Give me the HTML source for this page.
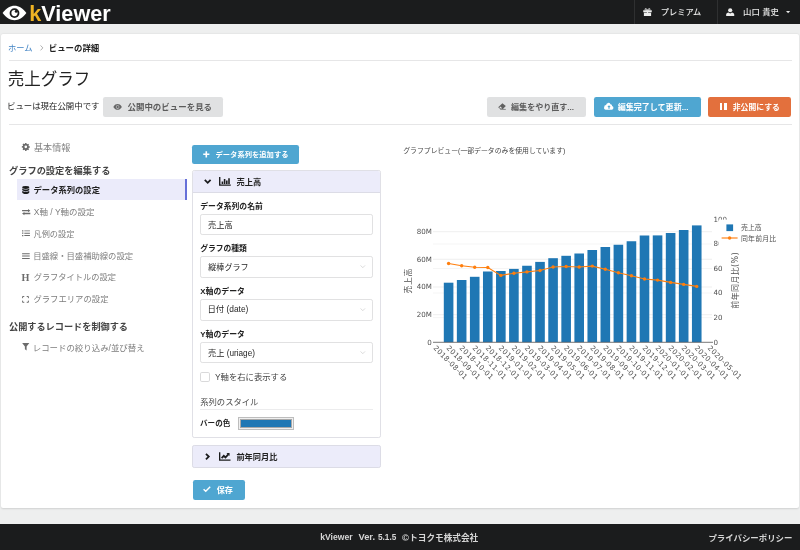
<!DOCTYPE html>
<html lang="ja">
<head>
<meta charset="utf-8">
<title>kViewer</title>
<style>
*{box-sizing:border-box;margin:0;padding:0}
html,body{width:800px;height:550px;overflow:hidden}
body{background:#eeefef;font-family:"Liberation Sans","Noto Sans CJK JP",sans-serif;color:#222;position:relative;font-size:8px}
#w{position:absolute;left:0;top:0;width:800px;height:550px;will-change:transform}
.a{position:absolute}
.t{position:absolute;white-space:nowrap;line-height:1}
#hdr{position:absolute;left:0;top:0;width:800px;height:24px;background:#1b1c1d}
#ftr{position:absolute;left:0;top:523.7px;width:800px;height:26.3px;background:#1b1c1d}
#card{position:absolute;left:1px;top:33.5px;width:797.5px;height:474.7px;background:#fff;border-radius:2px;box-shadow:0 0.5px 2px rgba(0,0,0,.13)}
.hr{position:absolute;height:1px;background:#e6e6e7}
.btn{position:absolute;border-radius:2.2px}
.inp{position:absolute;left:200.2px;width:172.5px;height:21.800px;border:1px solid #e1e1e2;border-radius:2.2px;background:#fff}
svg{position:absolute;overflow:visible}
</style>
</head>
<body>
<div id="w">

<div id="hdr">
<svg style="left:0;top:0" width="30" height="25" viewBox="0 0 30 25"><path d="M2.6 13C6.5 7.900 10.2 5.800 14.5 5.800S22.500 7.900 26.400 13C22.500 18.100 18.800 20.200 14.500 20.200S6.500 18.100 2.600 13Z" fill="#fff"/><circle cx="14.5" cy="13.1" r="4.9" fill="#1b1c1d"/><circle cx="14.5" cy="13.1" r="3.1" fill="#fff"/><circle cx="16.2" cy="11.4" r="1.45" fill="#1b1c1d"/></svg>
<span class="t" style="left:29.2px;top:2.7px;font-size:21.6px;font-weight:bold;color:#fff;letter-spacing:0.05px"><span style="color:#f0b323">k</span>Viewer</span>
<div class="a" style="left:634.3px;top:0;width:1px;height:24px;background:#2f3031"></div>
<div class="a" style="left:716.5px;top:0;width:1px;height:24px;background:#2f3031"></div>
<svg style="left:643px;top:7.5px" width="9" height="8" viewBox="0 0 18 16"><path fill="#ededed" d="M0.500 4.500h17v4H0.500zM1.800 9.500h6v6.500h-6zM10.200 9.500h6v6.500h-6zM7.800 4.500h2.400v11.500H7.800z"/><path fill="none" stroke="#ededed" stroke-width="1.700" d="M9 4.500C7 0.500 3.500 0.500 4 2.700S9 4.500 9 4.500 13.500 4.900 14 2.700 11 0.500 9 4.500z"/></svg>
<span class="t" style="left:660.83px;top:8.95px;font-size:8.20px;font-weight:500;color:#e6e6e6;">プレミアム</span>
<svg style="left:725.800px;top:7.5px" width="8.4" height="8" viewBox="0 0 16 15"><circle cx="8" cy="4.200" r="4" fill="#ededed"/><path fill="#ededed" d="M0.300 15v-2.500c0-2.400 2-3.700 4.400-4L8 10.200l3.300-1.700c2.400.3 4.400 1.600 4.400 4V15z"/></svg>
<span class="t" style="left:743.05px;top:7.95px;font-size:8.42px;font-weight:500;color:#e6e6e6;">山口 貴史</span>
<svg style="left:786px;top:10.7px" width="4.2" height="2.3" viewBox="0 0 8 4"><path d="M0 0h8L4 4z" fill="#e8e8e8"/></svg>
</div>
<div id="card"></div>
<span class="t" style="left:8.00px;top:45.12px;font-size:8.27px;font-weight:normal;color:#4183c4;">ホーム</span>
<svg style="left:39.6px;top:45.2px" width="3.4" height="5.8" viewBox="0 0 4 7"><path d="M0.6 0.5L3.4 3.5L0.6 6.500" fill="none" stroke="#a0a0a0" stroke-width="1"/></svg>
<span class="t" style="left:48.75px;top:44.25px;font-size:8.43px;font-weight:bold;color:#222;">ビューの詳細</span>
<div class="hr" style="left:8.5px;top:59.6px;width:783px"></div>
<span class="t" style="left:7.75px;top:71.58px;font-size:16.52px;font-weight:normal;color:#222;">売上グラフ</span>
<span class="t" style="left:7.00px;top:102.03px;font-size:8.42px;font-weight:normal;color:#222;">ビューは現在公開中です</span>
<div class="hr" style="left:8.5px;top:124.2px;width:783px"></div>
<div class="btn" style="left:103.2px;top:96.600px;width:119.800px;height:20.1px;background:#e0e1e2"></div>
<svg style="left:113.200px;top:103.700px" width="9.2" height="5.900" viewBox="0 0 15 10"><path d="M0.200 5C2.500 1.400 5 0.200 7.500 0.200S12.500 1.400 14.800 5C12.500 8.600 10 9.800 7.500 9.800S2.500 8.600 0.200 5z" fill="#666"/><circle cx="7.5" cy="5" r="3" fill="#d4d5d6"/><circle cx="7.5" cy="5" r="2" fill="#666"/></svg>
<span class="t" style="left:127.50px;top:103.05px;font-size:8.46px;font-weight:bold;color:#5c5c5c;">公開中のビューを見る</span>
<div class="btn" style="left:487px;top:96.600px;width:98.5px;height:20.1px;background:#e0e1e2"></div>
<svg style="left:497.5px;top:103px" width="8" height="7" viewBox="0 0 8 7"><path d="M4.4 0.200L7.800 3L4.900 6.100H2.200L0.200 4.300Z" fill="#606060"/><path d="M2.300 3.500L4.200 5.200L3.700 5.500H2.600L1.300 4.350Z" fill="#e8e9ea"/><path d="M2.200 6.400H7.800" stroke="#606060" stroke-width="0.700"/></svg>
<span class="t" style="left:511.05px;top:103.72px;font-size:8.05px;font-weight:bold;color:#5c5c5c;">編集をやり直す...</span>
<div class="btn" style="left:593.5px;top:96.600px;width:107px;height:20.1px;background:#4fa6d1"></div>
<svg style="left:603.8px;top:103.1px" width="10" height="7" viewBox="0 0 20 14"><path fill="#fff" d="M16.200 6.100A3.300 3.300 0 0 0 13 2.500 4.600 4.600 0 0 0 4.200 4 3.800 3.800 0 0 0 0.500 8 3.700 3.700 0 0 0 4.200 13.500H15.500A3.800 3.800 0 0 0 16.200 6.100z"/><path fill="#4fa6d1" d="M10 4.500L13.300 8.200H11.200V11.500H8.800V8.200H6.700z"/></svg>
<span class="t" style="left:617.67px;top:103.72px;font-size:8.04px;font-weight:bold;color:#fff;">編集完了して更新...</span>
<div class="btn" style="left:708.2px;top:96.600px;width:83.300px;height:20.1px;background:#e3703d"></div>
<div class="a" style="left:719.6px;top:103.2px;width:2.700px;height:6.700px;background:#fff"></div><div class="a" style="left:724px;top:103.2px;width:2.700px;height:6.700px;background:#fff"></div>
<span class="t" style="left:732.75px;top:103.60px;font-size:7.83px;font-weight:bold;color:#fff;">非公開にする</span>
<svg style="left:22.2px;top:142.8px" width="7.6" height="7.6" viewBox="0 0 16 16"><path fill="#6c6c6c" fill-rule="evenodd" d="M6.600 0h2.800l.4 2.100 1.300.6 1.800-1.200 2 2-1.200 1.800.6 1.300 2.100.4v2.800l-2.100.4-.6 1.300 1.200 1.800-2 2-1.800-1.200-1.300.6-.4 2.100H6.600l-.4-2.100-1.300-.6-1.800 1.200-2-2 1.200-1.800-.6-1.300L-.4 9.400V6.600l2.100-.4.6-1.300L1.100 3.100l2-2 1.800 1.200 1.300-.6zM8 5.200a2.800 2.800 0 1 0 0 5.600 2.800 2.800 0 0 0 0-5.600z"/></svg>
<span class="t" style="left:34.02px;top:143.60px;font-size:9.09px;font-weight:normal;color:#7e7e7e;">基本情報</span>
<span class="t" style="left:9.00px;top:166.70px;font-size:9.22px;font-weight:bold;color:#444;">グラフの設定を編集する</span>
<div class="a" style="left:17px;top:178.7px;width:170px;height:21.6px;background:#ebebfa"></div><div class="a" style="left:185.200px;top:178.7px;width:2px;height:21.6px;background:#6670d8"></div>
<svg style="left:22px;top:185.900px" width="7.5" height="8.300" viewBox="0 0 14 16"><ellipse cx="7" cy="2.800" rx="6.800" ry="2.800" fill="#1b1c1d"/><path fill="#1b1c1d" d="M0.200 4.600C1.500 6.200 4 6.700 7 6.700s5.500-.5 6.800-2.100v2.600c0 1.500-3 2.700-6.800 2.700S.2 8.700.2 7.200zM0.200 9.200c1.300 1.600 3.800 2.100 6.800 2.100s5.500-.5 6.800-2.100v3.300c0 1.500-3 3-6.800 3S.2 14 .2 12.500z"/></svg>
<span class="t" style="left:33.55px;top:186.25px;font-size:8.30px;font-weight:bold;color:#222;">データ系列の設定</span>
<svg style="left:21.6px;top:208.600px" width="8.4" height="6.2" viewBox="0 0 16 12"><path fill="#6c6c6c" d="M0 1.800h11.500V0L16 3.200 11.500 6.400V4.600H0zM16 10.200H4.500V12L0 8.800 4.500 5.600v1.800H16z"/></svg>
<span class="t" style="left:33.80px;top:208.25px;font-size:8.47px;font-weight:normal;color:#7e7e7e;">X軸 / Y軸の設定</span>
<svg style="left:21.7px;top:230.2px" width="8" height="6.4" viewBox="0 0 16 13"><path fill="#6c6c6c" d="M0 0.500h2.600v2.400H0zM0 5.300h2.600v2.400H0zM0 10.100h2.600v2.400H0zM4.600 0.800h11.400v1.800H4.600zM4.600 5.600h11.400v1.800H4.600zM4.600 10.400h11.400v1.800H4.600z"/></svg>
<span class="t" style="left:33.55px;top:230.62px;font-size:8.17px;font-weight:normal;color:#7e7e7e;">凡例の設定</span>
<svg style="left:21.8px;top:252.500px" width="7.800" height="6.2" viewBox="0 0 16 13"><path fill="#6c6c6c" d="M0 0.400h16v2.200H0zM0 5.400h16v2.200H0zM0 10.400h16v2.200H0z"/></svg>
<span class="t" style="left:33.17px;top:251.62px;font-size:8.33px;font-weight:normal;color:#7e7e7e;">目盛線・目盛補助線の設定</span>
<span class="t" style="left:21.6px;top:273px;font-family:'Liberation Serif',serif;font-weight:bold;font-size:10.2px;color:#6c6c6c">H</span>
<span class="t" style="left:33.67px;top:274.43px;font-size:8.24px;font-weight:normal;color:#7e7e7e;">グラフタイトルの設定</span>
<svg style="left:22.2px;top:295.900px" width="7" height="6.800" viewBox="0 0 14 14"><path fill="none" stroke="#6c6c6c" stroke-width="2" d="M1 4.500V1h3.500M9.500 1H13v3.500M13 9.500V13H9.500M4.500 13H1V9.500"/></svg>
<span class="t" style="left:33.42px;top:295.32px;font-size:8.35px;font-weight:normal;color:#7e7e7e;">グラフエリアの設定</span>
<span class="t" style="left:9.00px;top:323.38px;font-size:9.17px;font-weight:bold;color:#444;">公開するレコードを制御する</span>
<svg style="left:21.800px;top:343.200px" width="7.5" height="7.5" viewBox="0 0 14 14"><path fill="#6c6c6c" d="M0.300 0h13.400L8.600 6.300V14L5.400 11.600V6.300z"/></svg>
<span class="t" style="left:32.75px;top:343.65px;font-size:8.44px;font-weight:normal;color:#7e7e7e;">レコードの絞り込み/並び替え</span>
<div class="btn" style="left:192.4px;top:144.700px;width:106.200px;height:19.1px;background:#4fa6d1"></div>
<svg style="left:203px;top:151.200px" width="6.6" height="6.600" viewBox="0 0 10 10"><path d="M5 0.300v9.400M0.300 5h9.400" stroke="#fff" stroke-width="2.400"/></svg>
<span class="t" style="left:215.52px;top:151.15px;font-size:7.30px;font-weight:bold;color:#fff;">データ系列を追加する</span>
<div class="a" style="left:192.300px;top:170.200px;width:188.300px;height:267.800px;border:1px solid #e0e0e6;border-radius:2.2px;background:#fff"></div>
<div class="a" style="left:192.800px;top:170.700px;width:187.300px;height:22px;background:#ececfa;border-bottom:1px solid #dcdce6;border-radius:2px 2px 0 0"></div>
<svg style="left:203.500px;top:179px" width="7.4" height="4.900" viewBox="0 0 14 9"><path d="M1.500 1.500L7 7l5.500-5.500" fill="none" stroke="#1b1c1d" stroke-width="3.400"/></svg>
<svg style="left:218.900px;top:176.900px" width="11.800" height="8.800" viewBox="0 0 24 18"><path d="M1.400 0v16.600H24" fill="none" stroke="#1b1c1d" stroke-width="2.800"/><path fill="#1b1c1d" d="M5.300 9h3.200v5.300H5.300zM9.800 4h3.200v10.300H9.800zM14.300 7h3.200v7.300h-3.200zM18.800 2.500h3.200v11.800h-3.200z"/></svg>
<span class="t" style="left:236.55px;top:179.32px;font-size:8.26px;font-weight:bold;color:#222;">売上高</span>
<span class="t" style="left:200.30px;top:203.10px;font-size:7.82px;font-weight:bold;color:#222;">データ系列の名前</span>
<div class="inp" style="top:213.500px"></div>
<span class="t" style="left:208.02px;top:221.53px;font-size:8.23px;font-weight:normal;color:#262626;">売上高</span>
<span class="t" style="left:200.20px;top:245.00px;font-size:7.79px;font-weight:bold;color:#222;">グラフの種類</span>
<div class="inp" style="top:256px"></div>
<span class="t" style="left:208.30px;top:263.50px;font-size:8.07px;font-weight:normal;color:#262626;">縦棒グラフ</span>
<span class="t" style="left:200.35px;top:288.10px;font-size:7.86px;font-weight:bold;color:#222;">X軸のデータ</span>
<div class="inp" style="top:298.900px"></div>
<span class="t" style="left:207.43px;top:305.02px;font-size:8.39px;font-weight:normal;color:#262626;">日付 (date)</span>
<span class="t" style="left:200.35px;top:331.30px;font-size:7.86px;font-weight:bold;color:#222;">Y軸のデータ</span>
<div class="inp" style="top:341.700px"></div>
<span class="t" style="left:208.05px;top:349.62px;font-size:8.20px;font-weight:normal;color:#262626;">売上 (uriage)</span>
<svg style="left:360.300px;top:265.3px" width="5.6" height="3.2" viewBox="0 0 10 6"><path d="M0.800 0.800L5 5l4.200-4.200" fill="none" stroke="#c4c4c4" stroke-width="1.200"/></svg>
<svg style="left:360.300px;top:308.2px" width="5.6" height="3.2" viewBox="0 0 10 6"><path d="M0.800 0.800L5 5l4.200-4.200" fill="none" stroke="#c4c4c4" stroke-width="1.200"/></svg>
<svg style="left:360.300px;top:351.0px" width="5.6" height="3.2" viewBox="0 0 10 6"><path d="M0.800 0.800L5 5l4.200-4.200" fill="none" stroke="#c4c4c4" stroke-width="1.200"/></svg>
<div class="a" style="left:200.200px;top:372.300px;width:9.600px;height:9.600px;border:1px solid #d9d9da;border-radius:1.800px;background:#fff"></div>
<span class="t" style="left:214.97px;top:373.43px;font-size:8.35px;font-weight:normal;color:#444;">Y軸を右に表示する</span>
<span class="t" style="left:200.22px;top:397.82px;font-size:8.32px;font-weight:normal;color:#4a4a4a;">系列のスタイル</span>
<div class="hr" style="left:200.200px;top:408.700px;width:172.500px;background:#ececed"></div>
<span class="t" style="left:200.10px;top:419.88px;font-size:7.54px;font-weight:bold;color:#222;">バーの色</span>
<div class="a" style="left:237.500px;top:417px;width:56.500px;height:12.600px;border:1px solid #bdbdbd;background:#efefef"></div>
<div class="a" style="left:240.900px;top:420px;width:50.200px;height:6.800px;background:#1f77b4;outline:0.6px solid #a8a8a8"></div>
<div class="a" style="left:192.300px;top:445.200px;width:188.300px;height:22.400px;border:1px solid #dcdce6;border-radius:2.2px;background:#ececfa"></div>
<svg style="left:204.700px;top:452.700px" width="5" height="7.200" viewBox="0 0 9 14"><path d="M1.500 1.500L7 7l-5.500 5.500" fill="none" stroke="#1b1c1d" stroke-width="3.500"/></svg>
<svg style="left:219px;top:451.900px" width="11.500" height="9" viewBox="0 0 24 18"><path d="M1.400 0v16.600H24" fill="none" stroke="#1b1c1d" stroke-width="2.800"/><path d="M5.500 12.500l4.500-5 3.500 3.500 6-6.500" fill="none" stroke="#1b1c1d" stroke-width="3.600"/><path fill="#1b1c1d" d="M15.500 1.500h6.500v6.500z"/></svg>
<span class="t" style="left:236.42px;top:454.32px;font-size:8.21px;font-weight:bold;color:#222;">前年同月比</span>
<div class="btn" style="left:192.600px;top:479.600px;width:52px;height:20.2px;background:#4fa6d1"></div>
<svg style="left:203.400px;top:486.400px" width="7.800" height="6.200" viewBox="0 0 13 10"><path d="M1 5.200l3.600 3.500L12 1.200" fill="none" stroke="#fff" stroke-width="2.400"/></svg>
<span class="t" style="left:216.78px;top:487.02px;font-size:8.10px;font-weight:bold;color:#fff;">保存</span>
<span class="t" style="left:403.23px;top:148.03px;font-size:6.87px;font-weight:normal;color:#444;">グラフプレビュー(一部データのみを使用しています)</span>
<svg style="left:0;top:0" width="800" height="550" viewBox="0 0 800 550">
<path d="M433 314.7H712" stroke="#ebebeb" stroke-width="0.8"/>
<path d="M433 287H712" stroke="#ebebeb" stroke-width="0.8"/>
<path d="M433 259.3H712" stroke="#ebebeb" stroke-width="0.8"/>
<path d="M433 231.7H712" stroke="#ebebeb" stroke-width="0.8"/>
<path d="M433 317.6H712" stroke="#f1f1f1" stroke-width="0.7"/>
<path d="M433 293H712" stroke="#f1f1f1" stroke-width="0.7"/>
<path d="M433 268.5H712" stroke="#f1f1f1" stroke-width="0.7"/>
<path d="M433 244H712" stroke="#f1f1f1" stroke-width="0.7"/>
<rect x="443.80" y="282.7" width="9.6" height="59.50" fill="#1f77b4"/>
<rect x="456.86" y="280" width="9.6" height="62.20" fill="#1f77b4"/>
<rect x="469.92" y="276.8" width="9.6" height="65.40" fill="#1f77b4"/>
<rect x="482.98" y="271.5" width="9.6" height="70.70" fill="#1f77b4"/>
<rect x="496.04" y="271" width="9.6" height="71.20" fill="#1f77b4"/>
<rect x="509.10" y="268.9" width="9.6" height="73.30" fill="#1f77b4"/>
<rect x="522.16" y="265.75" width="9.6" height="76.45" fill="#1f77b4"/>
<rect x="535.22" y="261.9" width="9.6" height="80.30" fill="#1f77b4"/>
<rect x="548.28" y="258.2" width="9.6" height="84.00" fill="#1f77b4"/>
<rect x="561.34" y="255.8" width="9.6" height="86.40" fill="#1f77b4"/>
<rect x="574.40" y="253.5" width="9.6" height="88.70" fill="#1f77b4"/>
<rect x="587.46" y="250" width="9.6" height="92.20" fill="#1f77b4"/>
<rect x="600.52" y="247" width="9.6" height="95.20" fill="#1f77b4"/>
<rect x="613.58" y="244.75" width="9.6" height="97.45" fill="#1f77b4"/>
<rect x="626.64" y="241.25" width="9.6" height="100.95" fill="#1f77b4"/>
<rect x="639.70" y="235.5" width="9.6" height="106.70" fill="#1f77b4"/>
<rect x="652.76" y="235.4" width="9.6" height="106.80" fill="#1f77b4"/>
<rect x="665.82" y="233" width="9.6" height="109.20" fill="#1f77b4"/>
<rect x="678.88" y="230" width="9.6" height="112.20" fill="#1f77b4"/>
<rect x="691.94" y="225.4" width="9.6" height="116.80" fill="#1f77b4"/>
<path d="M433 342.3H713" stroke="#555" stroke-width="0.8"/>
<polyline points="448.60,263.5 461.66,265.75 474.72,267.2 487.78,267.5 500.84,275.4 513.90,273.3 526.96,271.9 540.02,270.5 553.08,267 566.14,266.5 579.20,267 592.26,266.1 605.32,269.25 618.38,272.75 631.44,275.7 644.50,279 657.56,280.1 670.62,282.4 683.68,284.4 696.74,286.4" fill="none" stroke="#ff7f0e" stroke-width="1.15"/>
<circle cx="448.60" cy="263.5" r="1.7" fill="#ff7f0e"/>
<circle cx="461.66" cy="265.75" r="1.7" fill="#ff7f0e"/>
<circle cx="474.72" cy="267.2" r="1.7" fill="#ff7f0e"/>
<circle cx="487.78" cy="267.5" r="1.7" fill="#ff7f0e"/>
<circle cx="500.84" cy="275.4" r="1.7" fill="#ff7f0e"/>
<circle cx="513.90" cy="273.3" r="1.7" fill="#ff7f0e"/>
<circle cx="526.96" cy="271.9" r="1.7" fill="#ff7f0e"/>
<circle cx="540.02" cy="270.5" r="1.7" fill="#ff7f0e"/>
<circle cx="553.08" cy="267" r="1.7" fill="#ff7f0e"/>
<circle cx="566.14" cy="266.5" r="1.7" fill="#ff7f0e"/>
<circle cx="579.20" cy="267" r="1.7" fill="#ff7f0e"/>
<circle cx="592.26" cy="266.1" r="1.7" fill="#ff7f0e"/>
<circle cx="605.32" cy="269.25" r="1.7" fill="#ff7f0e"/>
<circle cx="618.38" cy="272.75" r="1.7" fill="#ff7f0e"/>
<circle cx="631.44" cy="275.7" r="1.7" fill="#ff7f0e"/>
<circle cx="644.50" cy="279" r="1.7" fill="#ff7f0e"/>
<circle cx="657.56" cy="280.1" r="1.7" fill="#ff7f0e"/>
<circle cx="670.62" cy="282.4" r="1.7" fill="#ff7f0e"/>
<circle cx="683.68" cy="284.4" r="1.7" fill="#ff7f0e"/>
<circle cx="696.74" cy="286.4" r="1.7" fill="#ff7f0e"/>
<text x="431.8" y="234" text-anchor="end" style="font-family:'DejaVu Sans',Verdana,sans-serif;font-size:7.1px" fill="#505050">80M</text>
<text x="431.8" y="262" text-anchor="end" style="font-family:'DejaVu Sans',Verdana,sans-serif;font-size:7.1px" fill="#505050">60M</text>
<text x="431.8" y="289" text-anchor="end" style="font-family:'DejaVu Sans',Verdana,sans-serif;font-size:7.1px" fill="#505050">40M</text>
<text x="431.8" y="317" text-anchor="end" style="font-family:'DejaVu Sans',Verdana,sans-serif;font-size:7.1px" fill="#505050">20M</text>
<text x="431.8" y="345" text-anchor="end" style="font-family:'DejaVu Sans',Verdana,sans-serif;font-size:7.1px" fill="#505050">0</text>
<text x="713.5" y="222" style="font-family:'DejaVu Sans',Verdana,sans-serif;font-size:7.1px" fill="#505050">100</text>
<text x="713.5" y="246" style="font-family:'DejaVu Sans',Verdana,sans-serif;font-size:7.1px" fill="#505050">80</text>
<text x="713.5" y="271" style="font-family:'DejaVu Sans',Verdana,sans-serif;font-size:7.1px" fill="#505050">60</text>
<text x="713.5" y="295" style="font-family:'DejaVu Sans',Verdana,sans-serif;font-size:7.1px" fill="#505050">40</text>
<text x="713.5" y="320" style="font-family:'DejaVu Sans',Verdana,sans-serif;font-size:7.1px" fill="#505050">20</text>
<text x="713.5" y="345" style="font-family:'DejaVu Sans',Verdana,sans-serif;font-size:7.1px" fill="#505050">0</text>
<text transform="translate(434.64,346.8) rotate(45)" x="0" y="2.4" style="font-family:'DejaVu Sans',Verdana,sans-serif;font-size:7.1px;letter-spacing:0.36px" fill="#505050">2018-08-01</text>
<text transform="translate(447.70,346.8) rotate(45)" x="0" y="2.4" style="font-family:'DejaVu Sans',Verdana,sans-serif;font-size:7.1px;letter-spacing:0.36px" fill="#505050">2018-09-01</text>
<text transform="translate(460.76,346.8) rotate(45)" x="0" y="2.4" style="font-family:'DejaVu Sans',Verdana,sans-serif;font-size:7.1px;letter-spacing:0.36px" fill="#505050">2018-10-01</text>
<text transform="translate(473.82,346.8) rotate(45)" x="0" y="2.4" style="font-family:'DejaVu Sans',Verdana,sans-serif;font-size:7.1px;letter-spacing:0.36px" fill="#505050">2018-11-01</text>
<text transform="translate(486.88,346.8) rotate(45)" x="0" y="2.4" style="font-family:'DejaVu Sans',Verdana,sans-serif;font-size:7.1px;letter-spacing:0.36px" fill="#505050">2018-12-01</text>
<text transform="translate(499.94,346.8) rotate(45)" x="0" y="2.4" style="font-family:'DejaVu Sans',Verdana,sans-serif;font-size:7.1px;letter-spacing:0.36px" fill="#505050">2019-01-01</text>
<text transform="translate(513.00,346.8) rotate(45)" x="0" y="2.4" style="font-family:'DejaVu Sans',Verdana,sans-serif;font-size:7.1px;letter-spacing:0.36px" fill="#505050">2019-02-01</text>
<text transform="translate(526.06,346.8) rotate(45)" x="0" y="2.4" style="font-family:'DejaVu Sans',Verdana,sans-serif;font-size:7.1px;letter-spacing:0.36px" fill="#505050">2019-03-01</text>
<text transform="translate(539.12,346.8) rotate(45)" x="0" y="2.4" style="font-family:'DejaVu Sans',Verdana,sans-serif;font-size:7.1px;letter-spacing:0.36px" fill="#505050">2019-04-01</text>
<text transform="translate(552.18,346.8) rotate(45)" x="0" y="2.4" style="font-family:'DejaVu Sans',Verdana,sans-serif;font-size:7.1px;letter-spacing:0.36px" fill="#505050">2019-05-01</text>
<text transform="translate(565.24,346.8) rotate(45)" x="0" y="2.4" style="font-family:'DejaVu Sans',Verdana,sans-serif;font-size:7.1px;letter-spacing:0.36px" fill="#505050">2019-06-01</text>
<text transform="translate(578.30,346.8) rotate(45)" x="0" y="2.4" style="font-family:'DejaVu Sans',Verdana,sans-serif;font-size:7.1px;letter-spacing:0.36px" fill="#505050">2019-07-01</text>
<text transform="translate(591.36,346.8) rotate(45)" x="0" y="2.4" style="font-family:'DejaVu Sans',Verdana,sans-serif;font-size:7.1px;letter-spacing:0.36px" fill="#505050">2019-08-01</text>
<text transform="translate(604.42,346.8) rotate(45)" x="0" y="2.4" style="font-family:'DejaVu Sans',Verdana,sans-serif;font-size:7.1px;letter-spacing:0.36px" fill="#505050">2019-09-01</text>
<text transform="translate(617.48,346.8) rotate(45)" x="0" y="2.4" style="font-family:'DejaVu Sans',Verdana,sans-serif;font-size:7.1px;letter-spacing:0.36px" fill="#505050">2019-10-01</text>
<text transform="translate(630.54,346.8) rotate(45)" x="0" y="2.4" style="font-family:'DejaVu Sans',Verdana,sans-serif;font-size:7.1px;letter-spacing:0.36px" fill="#505050">2019-11-01</text>
<text transform="translate(643.60,346.8) rotate(45)" x="0" y="2.4" style="font-family:'DejaVu Sans',Verdana,sans-serif;font-size:7.1px;letter-spacing:0.36px" fill="#505050">2019-12-01</text>
<text transform="translate(656.66,346.8) rotate(45)" x="0" y="2.4" style="font-family:'DejaVu Sans',Verdana,sans-serif;font-size:7.1px;letter-spacing:0.36px" fill="#505050">2020-01-01</text>
<text transform="translate(669.72,346.8) rotate(45)" x="0" y="2.4" style="font-family:'DejaVu Sans',Verdana,sans-serif;font-size:7.1px;letter-spacing:0.36px" fill="#505050">2020-02-01</text>
<text transform="translate(682.78,346.8) rotate(45)" x="0" y="2.4" style="font-family:'DejaVu Sans',Verdana,sans-serif;font-size:7.1px;letter-spacing:0.36px" fill="#505050">2020-03-01</text>
<text transform="translate(695.84,346.8) rotate(45)" x="0" y="2.4" style="font-family:'DejaVu Sans',Verdana,sans-serif;font-size:7.1px;letter-spacing:0.36px" fill="#505050">2020-04-01</text>
<text transform="translate(708.90,346.8) rotate(45)" x="0" y="2.4" style="font-family:'DejaVu Sans',Verdana,sans-serif;font-size:7.1px;letter-spacing:0.36px" fill="#505050">2020-05-01</text>
<rect x="718.6" y="219.6" width="62" height="29.500" fill="#fff"/>
<rect x="726.4" y="224.4" width="6.7" height="6.7" fill="#1f77b4"/>
<path d="M721.6 238H737.6" stroke="#ff7f0e" stroke-width="1.15"/><circle cx="729.6" cy="238" r="1.7" fill="#ff7f0e"/>
<text x="741" y="230.400" style="font-family:'DejaVu Sans','Noto Sans CJK JP',sans-serif;font-size:6.9px" fill="#505050">売上高</text>
<text x="741" y="240.700" style="font-family:'DejaVu Sans','Noto Sans CJK JP',sans-serif;font-size:6.9px;letter-spacing:0.2px" fill="#505050">同年前月比</text>
<text transform="translate(411.2,280.800) rotate(-90)" text-anchor="middle" style="font-family:'DejaVu Sans','Noto Sans CJK JP',sans-serif;font-size:7.800px;letter-spacing:0.600px" fill="#505050">売上高</text>
<text transform="translate(737.700,280.300) rotate(-90)" text-anchor="middle" style="font-family:'DejaVu Sans','Noto Sans CJK JP',sans-serif;font-size:8px;letter-spacing:0.350px" fill="#505050">前年同月比(%)</text>
</svg>
<div id="ftr"></div>
<span class="t" style="left:320.25px;top:533.30px;font-size:8.61px;font-weight:bold;color:#d6d6d6;">kViewer</span>
<span class="t" style="left:358.50px;top:533.42px;font-size:9.31px;font-weight:bold;color:#d6d6d6;">Ver.</span>
<span class="t" style="left:378.00px;top:534.05px;font-size:8.23px;font-weight:bold;color:#d6d6d6;">5.1.5</span>
<span class="t" style="left:402.00px;top:533.55px;font-size:9.35px;font-weight:bold;color:#d6d6d6;">©</span>
<span class="t" style="left:409.25px;top:533.67px;font-size:8.62px;font-weight:bold;color:#d6d6d6;">トヨクモ株式会社</span>
<span class="t" style="left:708.38px;top:533.58px;font-size:8.43px;font-weight:bold;color:#d6d6d6;">プライバシーポリシー</span>
</div>
</body></html>
